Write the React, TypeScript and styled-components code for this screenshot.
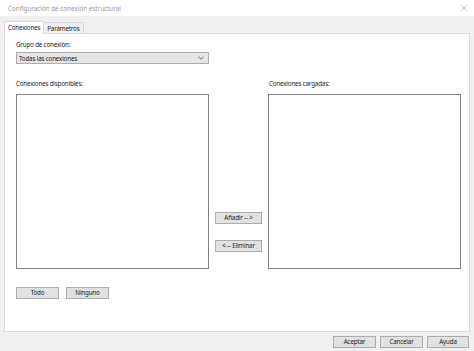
import React from "react";
import styled, { createGlobalStyle } from "styled-components";

const Global = createGlobalStyle`
  html, body { margin: 0; padding: 0; background: #ffffff; }
  body { font-family: "Noto Sans", "Open Sans", sans-serif; }
  * { box-sizing: border-box; }
`;

const Window = styled.div`
  width: 474px;
  height: 351px;
  display: flex;
  flex-direction: column;
  background: #f0f0f0;
  overflow: hidden;
  font-size: 6.2px;
  letter-spacing: -0.15px;
  color: #1a1a1a;
`;

const TitleBar = styled.div`
  height: 16px;
  background: #ffffff;
  display: flex;
  align-items: center;
  justify-content: space-between;
  padding: 0 6px 0 8px;
`;

const Title = styled.div`
  font-size: 6.3px;
  letter-spacing: 0;
  color: #9a9a9a;
  padding-top: 1px;
`;

const Close = styled.div`
  width: 8px;
  height: 8px;
  display: flex;
  align-items: center;
  justify-content: center;
  margin-top: -1px;
`;

const Body = styled.div`
  flex: 1;
  display: flex;
  flex-direction: column;
  padding: 4px 4px 0 4px;
`;

const TabStrip = styled.div`
  display: flex;
  align-items: flex-end;
  height: 13px;
  position: relative;
  z-index: 1;
`;

const Tab = styled.div<{ $active?: boolean }>`
  height: ${(p) => (p.$active ? "13px" : "11px")};
  padding: 0 3px;
  display: flex;
  align-items: center;
  background: ${(p) => (p.$active ? "#ffffff" : "#f0f0f0")};
  border: 1px solid #d9d9d9;
  border-bottom: ${(p) => (p.$active ? "1px solid #ffffff" : "none")};
  margin-left: ${(p) => (p.$active ? "0" : "-1px")};
  margin-bottom: ${(p) => (p.$active ? "-1px" : "0")};
  white-space: nowrap;
`;

const Panel = styled.div`
  width: 466px;
  height: 299px;
  background: #ffffff;
  border: 1px solid #d9d9d9;
  padding: 6px 0 0 11px;
  display: flex;
  flex-direction: column;
`;

const Label = styled.div`
  height: 10px;
  line-height: 10px;
  white-space: nowrap;
`;

const Select = styled.div`
  width: 193px;
  height: 12px;
  margin-top: 2px;
  background: #e5e5e5;
  border: 1px solid #adadad;
  display: flex;
  align-items: center;
  justify-content: space-between;
  padding: 0 4px 0 2px;
`;

const Lists = styled.div`
  margin-top: 15px;
  display: grid;
  grid-template-columns: 193px 47px 193px;
  grid-template-rows: 10px 175px;
  column-gap: 6px;
  row-gap: 5px;
`;

const ListLabel = styled(Label)<{ $indent?: number }>`
  padding-left: ${(p) => p.$indent ?? 0}px;
`;

const ListBox = styled.div`
  background: #ffffff;
  border: 1px solid #828282;
`;

const Middle = styled.div`
  display: flex;
  flex-direction: column;
  gap: 16px;
  padding-top: 118px;
`;

const Button = styled.button<{ $w: number }>`
  width: ${(p) => p.$w}px;
  height: 12px;
  padding: 0;
  margin: 0;
  background: #e1e1e1;
  border: 1px solid #adadad;
  font-family: inherit;
  font-size: 6.2px;
  letter-spacing: -0.15px;
  color: #1a1a1a;
  line-height: 10px;
  white-space: nowrap;
`;

const BottomRow = styled.div`
  margin-top: 18px;
  display: flex;
  gap: 7px;
`;

const Footer = styled.div`
  display: flex;
  justify-content: flex-end;
  gap: 4px;
  padding: 4px 1px 0 0;
`;

export default function App() {
  return (
    <>
      <Global />
      <Window>
        <TitleBar>
          <Title>Configuración de conexión estructural</Title>
          <Close>
            <svg width="6" height="6" viewBox="0 0 6 6">
              <path d="M0.5 0.5 L5.5 5.5 M5.5 0.5 L0.5 5.5" stroke="#b0b0b0" strokeWidth="0.8" />
            </svg>
          </Close>
        </TitleBar>
        <Body>
          <TabStrip>
            <Tab $active>Conexiones</Tab>
            <Tab>Parámetros</Tab>
          </TabStrip>
          <Panel>
            <Label>Grupo de conexión:</Label>
            <Select>
              <span>Todas las conexiones</span>
              <svg width="6" height="4" viewBox="0 0 6 4">
                <path d="M0.5 0.8 L3 3.2 L5.5 0.8" fill="none" stroke="#555" strokeWidth="0.8" />
              </svg>
            </Select>
            <Lists>
              <ListLabel>Conexiones disponibles:</ListLabel>
              <div />
              <ListLabel $indent={1}>Conexiones cargadas:</ListLabel>
              <ListBox />
              <Middle>
                <Button $w={47}>Añadir -- &gt;</Button>
                <Button $w={47}>&lt; -- Eliminar</Button>
              </Middle>
              <ListBox />
            </Lists>
            <BottomRow>
              <Button $w={43}>Todo</Button>
              <Button $w={43}>Ninguno</Button>
            </BottomRow>
          </Panel>
          <Footer>
            <Button $w={43}>Aceptar</Button>
            <Button $w={43}>Cancelar</Button>
            <Button $w={42}>Ayuda</Button>
          </Footer>
        </Body>
      </Window>
    </>
  );
}
